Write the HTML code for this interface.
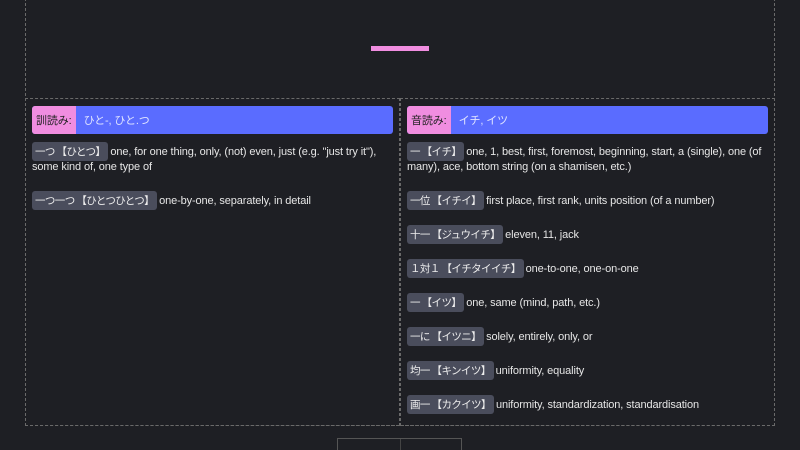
<!DOCTYPE html>
<html><head><meta charset="utf-8"><style>
*{margin:0;padding:0;box-sizing:border-box}
html,body{width:800px;height:450px;overflow:hidden}
body{background:#1e1f24;color:#e6e6e6;font-family:"Liberation Sans","Noto Sans CJK JP",sans-serif;font-size:11px;letter-spacing:-0.12px;position:relative}
.outer{position:absolute;left:25px;top:-2px;width:750px;height:428px;border:1px dashed #6a6a6a}
.bar{position:absolute;left:371px;top:46px;width:58px;height:5px;background:#f08de0}
.panel{position:absolute;top:98px;height:328px;border:1px dashed #6a6a6a;padding:7px 6px}
.hd{height:28px;background:#5a6cff;border-radius:3px;display:flex;align-items:center;overflow:hidden;margin-bottom:11px}
.hd .l{background:#f08de0;color:#222;height:100%;display:flex;align-items:center;padding:0 4px;font-size:11px}
.hd .v{color:#e0e4ff;padding-left:8px;font-size:11px}
.it{line-height:15px;height:auto;margin-bottom:19px}
.t{background:#4a4d5c;color:#eee;border-radius:3px;padding:2px 3px;margin-right:2px;font-size:10.5px;line-height:11px;letter-spacing:-0.6px;font-family:"Noto Sans CJK JP",sans-serif}
.bot{position:absolute;left:337px;top:438px;width:125px;height:20px;border:1px solid #555}
.bot:after{content:"";position:absolute;left:62px;top:0;height:20px;border-left:1px solid #444}
</style></head><body>
<div class="outer"></div>
<div class="bar"></div>
<div class="panel" style="left:25px;width:375px">
<div class="hd"><span class="l">訓読み:</span><span class="v">ひと-, ひと.つ</span></div>
<div class="it"><span class="t">一つ 【ひとつ】</span>one, for one thing, only, (not) even, just (e.g. "just try it"), some kind of, one type of</div>
<div class="it"><span class="t">一つ一つ 【ひとつひとつ】</span>one-by-one, separately, in detail</div>
</div>
<div class="panel" style="left:400px;width:375px">
<div class="hd"><span class="l">音読み:</span><span class="v">イチ, イツ</span></div>
<div class="it"><span class="t">一 【イチ】</span>one, 1, best, first, foremost, beginning, start, a (single), one (of many), ace, bottom string (on a shamisen, etc.)</div>
<div class="it"><span class="t">一位 【イチイ】</span>first place, first rank, units position (of a number)</div>
<div class="it"><span class="t">十一 【ジュウイチ】</span>eleven, 11, jack</div>
<div class="it"><span class="t">１対１ 【イチタイイチ】</span>one-to-one, one-on-one</div>
<div class="it"><span class="t">一 【イツ】</span>one, same (mind, path, etc.)</div>
<div class="it"><span class="t">一に 【イツニ】</span>solely, entirely, only, or</div>
<div class="it"><span class="t">均一 【キンイツ】</span>uniformity, equality</div>
<div class="it"><span class="t">画一 【カクイツ】</span>uniformity, standardization, standardisation</div>
</div>
<div class="bot"></div>
</body></html>
